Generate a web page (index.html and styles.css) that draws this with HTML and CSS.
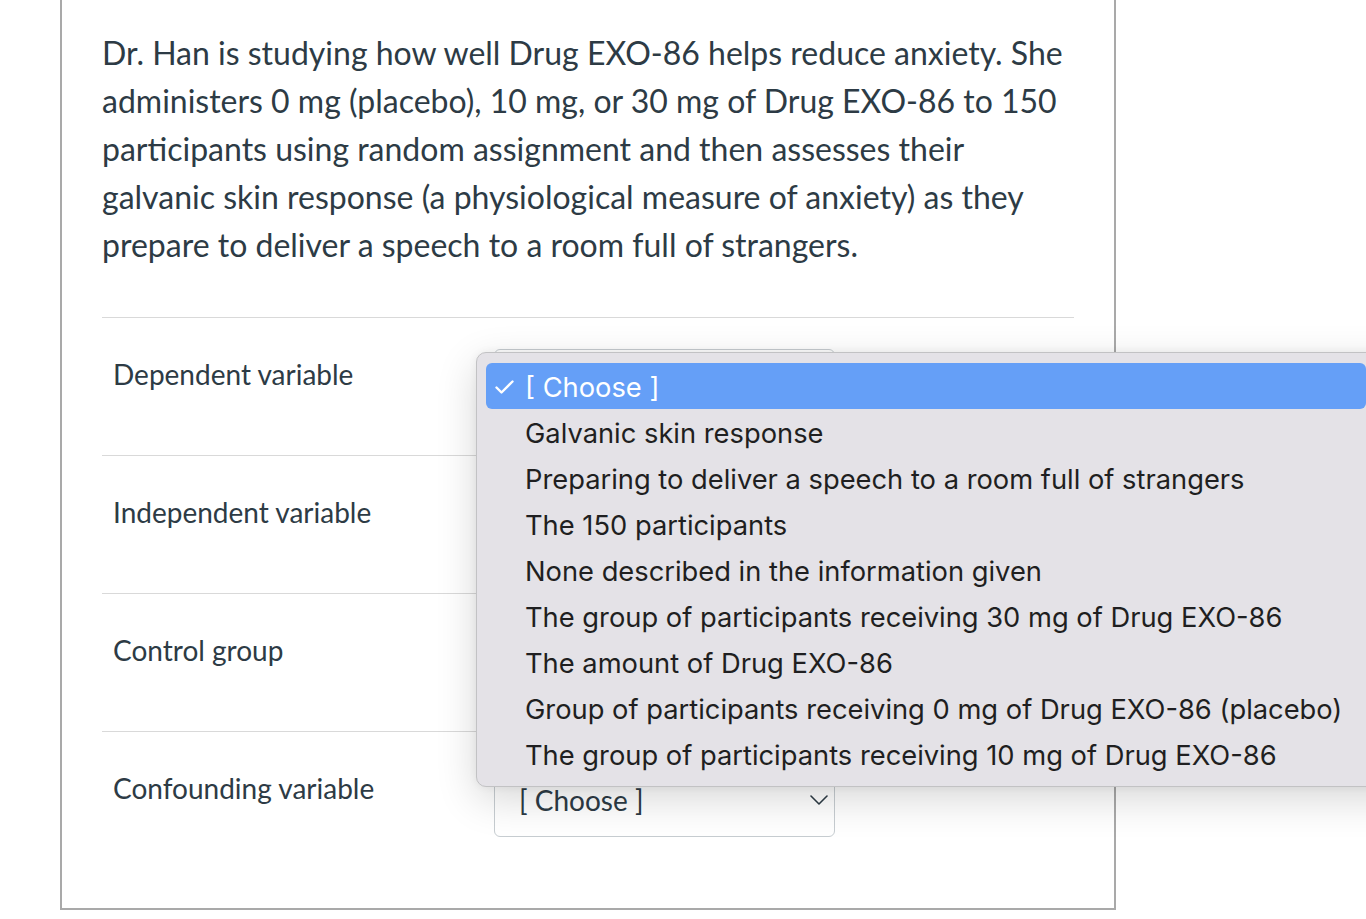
FILE: index.html
```html
<!DOCTYPE html>
<html lang="en">
<head>
<meta charset="utf-8">
<title>Quiz question</title>
<link rel="stylesheet" href="styles.css">
</head>
<body>
<div class="page">
  <div class="card">
    <p class="question">Dr. Han is studying how well Drug EXO-86 helps reduce anxiety. She<br>administers 0 mg (placebo), 10 mg, or 30 mg of Drug EXO-86 to 150<br>participants using random assignment and then assesses their<br>galvanic skin response (a physiological measure of anxiety) as they<br>prepare to deliver a speech to a room full of strangers.</p>
    <div class="rows">
      <div class="row">
        <div class="label">Dependent variable</div>
        <div class="select"><span>[ Choose ]</span><svg class="chev" viewBox="0 0 18 10" width="18" height="10"><path d="M1 1 L9 9 L17 1" fill="none" stroke="#2d3b45" stroke-width="1.6" stroke-linecap="round" stroke-linejoin="round"/></svg></div>
      </div>
      <div class="row">
        <div class="label">Independent variable</div>
        <div class="select"><span>[ Choose ]</span><svg class="chev" viewBox="0 0 18 10" width="18" height="10"><path d="M1 1 L9 9 L17 1" fill="none" stroke="#2d3b45" stroke-width="1.6" stroke-linecap="round" stroke-linejoin="round"/></svg></div>
      </div>
      <div class="row">
        <div class="label">Control group</div>
        <div class="select"><span>[ Choose ]</span><svg class="chev" viewBox="0 0 18 10" width="18" height="10"><path d="M1 1 L9 9 L17 1" fill="none" stroke="#2d3b45" stroke-width="1.6" stroke-linecap="round" stroke-linejoin="round"/></svg></div>
      </div>
      <div class="row">
        <div class="label">Confounding variable</div>
        <div class="select"><span>[ Choose ]</span><svg class="chev" viewBox="0 0 18 10" width="18" height="10"><path d="M1 1 L9 9 L17 1" fill="none" stroke="#2d3b45" stroke-width="1.6" stroke-linecap="round" stroke-linejoin="round"/></svg></div>
      </div>
    </div>
  </div>

  <div class="menu">
    <div class="item selected"><svg class="check" viewBox="0 0 19 14" width="19" height="14"><path d="M1.5 7.5 L6.5 12.5 L17.5 1.5" fill="none" stroke="#ffffff" stroke-width="2.4" stroke-linecap="round" stroke-linejoin="round"/></svg>[ Choose ]</div>
    <div class="item">Galvanic skin response</div>
    <div class="item">Preparing to deliver a speech to a room full of strangers</div>
    <div class="item">The 150 participants</div>
    <div class="item">None described in the information given</div>
    <div class="item">The group of participants receiving 30 mg of Drug EXO-86</div>
    <div class="item">The amount of Drug EXO-86</div>
    <div class="item">Group of participants receiving 0 mg of Drug EXO-86 (placebo)</div>
    <div class="item">The group of participants receiving 10 mg of Drug EXO-86</div>
  </div>
</div>
</body>
</html>
```

FILE: styles.css
```css
html, body {
  margin: 0;
  padding: 0;
  background: #ffffff;
  overflow: hidden;
}

.page {
  position: relative;
  width: 1366px;
  height: 919px;
  overflow: hidden;
}

.card {
  margin-left: 60px;
  width: 1056px;
  box-sizing: border-box;
  border: 2px solid #a9a9a9;
  border-top: none;
  padding: 29px 40px 39px 40px;
  font-family: Lato, "Open Sans", sans-serif;
  color: #2d3b45;
}

.question {
  margin: 0 0 48px 0;
  font-size: 32px;
  line-height: 48px;
  white-space: nowrap;
}

.rows {
  display: flex;
  flex-direction: column;
}

.row {
  display: flex;
  align-items: flex-start;
  border-top: 1px solid #d9d9d9;
  padding: 31px 0 32px 0;
}

.label {
  width: 381px;
  padding-left: 11px;
  margin-top: 5px;
  font-size: 28px;
  line-height: 40px;
}

.select {
  width: 341px;
  height: 74px;
  box-sizing: border-box;
  border: 1px solid #c7cdd1;
  border-radius: 6px;
  display: flex;
  align-items: center;
  justify-content: space-between;
  padding: 0 6px 0 24px;
  font-size: 28px;
  color: #2d3b45;
  background: #ffffff;
}

.chev {
  display: block;
}

.menu {
  position: absolute;
  left: 476px;
  top: 352px;
  width: 1000px;
  height: 435px;
  box-sizing: border-box;
  padding: 10px 9px;
  background: #e4e2e7;
  border: 1px solid #c2c2c4;
  border-radius: 10px;
  box-shadow: 0 12px 40px rgba(0, 0, 0, 0.16), 0 0 8px rgba(0, 0, 0, 0.06);
  font-family: Inter, "Noto Sans", sans-serif;
  font-size: 27.3px;
  color: #1f1f21;
}

.item {
  height: 46px;
  box-sizing: border-box;
  padding-top: 4px;
  line-height: 42px;
  padding-left: 39px;
  border-radius: 6px;
  position: relative;
  white-space: nowrap;
}

.item.selected {
  background: #659ff7;
  color: #ffffff;
  width: 880px;
}

.check {
  position: absolute;
  left: 9px;
  top: 17px;
}
```
